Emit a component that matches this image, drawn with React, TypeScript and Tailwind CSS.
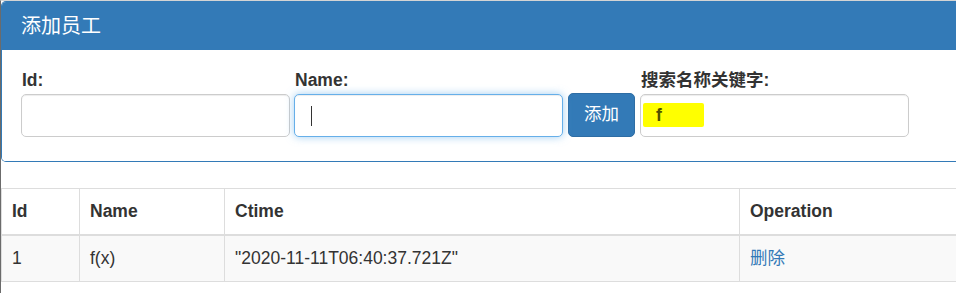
import React from "react";

const font = { fontFamily: '"Liberation Sans", Arial, "Noto Sans CJK SC", sans-serif' };

export default function App() {
  return (
    <div
      className="w-[956px] h-[293px] overflow-hidden bg-white border-t border-t-[#d4d4d4] border-l border-l-[#6b6b6b] text-[#333] text-[17.5px]"
      style={font}
    >
      <div className="w-[1000px]">
        {/* Panel */}
        <div className="p-px bg-[#337ab7] rounded-[5px]">
          <div className="bg-white rounded-[4px] overflow-hidden">
            <div className="h-[48px] bg-[#337ab7] pl-[19px] flex items-center text-white text-[20px] leading-none">
              添加员工
            </div>
            <div className="pl-[19px] pt-[20px] h-[111px] bg-white">
              <div className="flex items-end">
                <div className="flex flex-col w-[269px]">
                  <label className="font-bold leading-[20px] mb-[4px] pl-px">Id:</label>
                  <input className="h-[43px] w-[269px] border border-[#ccc] rounded-[5px] shadow-[inset_0_1px_1px_rgba(0,0,0,0.075)] outline-none" />
                </div>
                <div className="flex flex-col w-[269px] ml-[4px]">
                  <label className="font-bold leading-[20px] mb-[4px] pl-px">Name:</label>
                  <div className="relative h-[43px] w-[269px] border border-[#66afe9] rounded-[5px] shadow-[inset_0_1px_1px_rgba(0,0,0,0.075),0_0_8px_rgba(102,175,233,0.6)] bg-white">
                    <div className="absolute left-[16px] top-[11px] w-px h-[20px] bg-[#333]" />
                  </div>
                </div>
                <button className="ml-[5px] h-[44px] w-[67px] bg-[#337ab7] border border-[#2e6da4] rounded-[5px] text-white text-[17.5px] leading-none flex items-center justify-center">
                  添加
                </button>
                <div className="flex flex-col w-[269px] ml-[5px]">
                  <label className="font-bold leading-[20px] mb-[4px] pl-px">搜索名称关键字:</label>
                  <div className="relative h-[43px] w-[269px] border border-[#ccc] rounded-[5px] shadow-[inset_0_1px_1px_rgba(0,0,0,0.075)] bg-white">
                    <div className="absolute left-[2px] top-[8px] w-[61px] h-[24px] bg-[#ffff00] rounded-[2px]" />
                    <span className="absolute left-[15px] top-[8px] leading-[24px] text-[#505000] font-bold">f</span>
                  </div>
                </div>
              </div>
            </div>
          </div>
        </div>

        {/* Table */}
        <table className="mt-[26px] border-collapse w-[1000px] text-left">
          <thead>
            <tr className="bg-white">
              <th className="w-[78px] border border-[#ddd] border-b-2 px-[10px] py-[10px] leading-[25px] font-bold">Id</th>
              <th className="w-[145px] border border-[#ddd] border-b-2 px-[10px] py-[10px] leading-[25px] font-bold">Name</th>
              <th className="w-[515px] border border-[#ddd] border-b-2 px-[10px] py-[10px] leading-[25px] font-bold">Ctime</th>
              <th className="border border-[#ddd] border-b-2 px-[10px] py-[10px] leading-[25px] font-bold">Operation</th>
            </tr>
          </thead>
          <tbody>
            <tr className="bg-[#f9f9f9]">
              <td className="border border-[#ddd] px-[10px] py-[10px] leading-[25px]">1</td>
              <td className="border border-[#ddd] px-[10px] py-[10px] leading-[25px]">f(x)</td>
              <td className="border border-[#ddd] px-[10px] py-[10px] leading-[25px]">"2020-11-11T06:40:37.721Z"</td>
              <td className="border border-[#ddd] px-[10px] py-[10px] leading-[25px]">
                <a className="text-[#337ab7]">删除</a>
              </td>
            </tr>
          </tbody>
        </table>
      </div>
    </div>
  );
}
